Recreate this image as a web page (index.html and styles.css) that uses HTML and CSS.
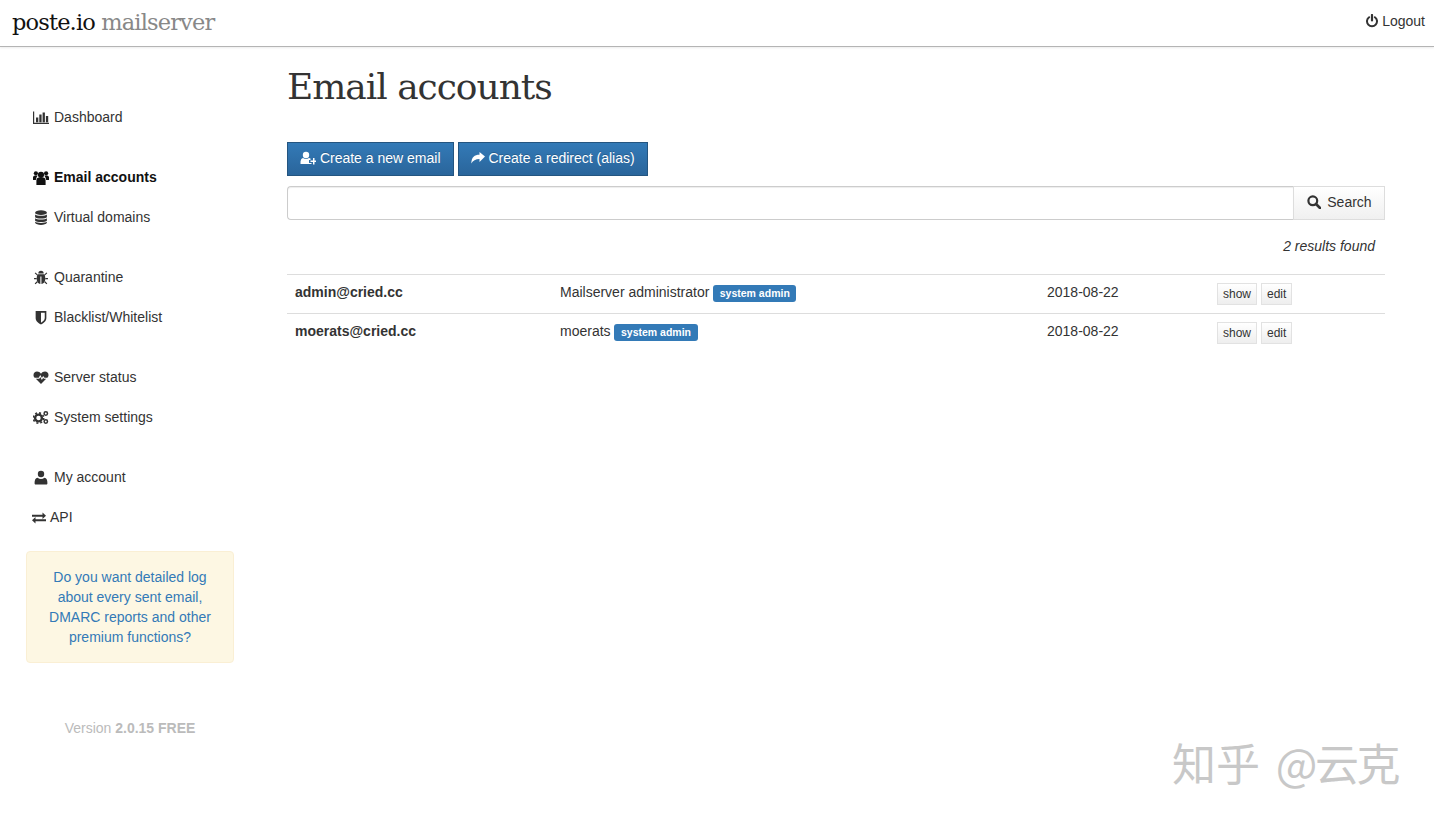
FILE: index.html
```html
<!DOCTYPE html>
<html lang="en">
<head>
<meta charset="utf-8">
<title>Email accounts</title>
<link rel="stylesheet" href="styles.css">
</head>
<body>
<header class="topbar">
  <div class="brand">poste.io <span class="brand-sub">mailserver</span></div>
  <a class="logout" href="#"><svg class="ic power" viewBox="0 0 12 14"><path d="M6 1v5.500" fill="none" stroke="currentColor" stroke-width="2.200" stroke-linecap="round"/><path d="M3.100 3.200A5 5 0 1 0 8.900 3.200" fill="none" stroke="currentColor" stroke-width="2" stroke-linecap="round"/></svg>Logout</a>
</header>
<div class="layout">
  <aside class="sidebar">
    <nav class="nav">
      <ul class="nav-group">
        <li><a href="#"><svg class="ic fw" viewBox="0 0 16 14"><path d="M0 1h1.200v11.300H16v1.200H0zM3 7h2.300v4.800H3zM6.300 4h2.300v7.800H6.300zM9.600 2h2.300v9.800H9.600zM12.900 5.500h2.300v6.300h-2.300z" fill="currentColor"/></svg>Dashboard</a></li>
      </ul>
      <ul class="nav-group">
        <li class="active"><a href="#"><svg class="ic fw" viewBox="0 0 16 14"><circle cx="8" cy="4.300" r="3.100" fill="currentColor"/><circle cx="2.900" cy="2.800" r="2.100" fill="currentColor"/><circle cx="13.100" cy="2.800" r="2.100" fill="currentColor"/><path d="M3.400 14.500V10c0-2 1.200-3 2.400-3h4.400c1.400 0 2.400 1 2.400 3v4.500zM0 9.500V7c0-1 .8-2 2-2h2.700L3.500 7 2.800 9.500zM16 9.500V7c0-1-.8-2-2-2h-2.700l1.200 2 .7 2.500z" fill="currentColor"/></svg>Email accounts</a></li>
        <li><a href="#"><svg class="ic fw" viewBox="0 0 14 14"><ellipse cx="7" cy="2.500" rx="5.500" ry="2.200" fill="currentColor"/><path d="M1.500 4.200C2.500 5.700 11.500 5.700 12.500 4.200V6.700C11.500 8.200 2.500 8.200 1.500 6.700zM1.500 7.700C2.500 9.200 11.500 9.200 12.500 7.700V10C11.500 11.500 2.500 11.500 1.500 10zM1.500 11C2.500 12.400 11.500 12.400 12.500 11V12C11.500 14.600 2.500 14.600 1.500 12z" fill="currentColor"/></svg>Virtual domains</a></li>
      </ul>
      <ul class="nav-group">
        <li><a href="#"><svg class="ic fw" viewBox="0 0 14 14"><path d="M4.500 3.200a2.500 2.500 0 0 1 5 0z" fill="currentColor"/><path d="M3.800 4h6.400c.6 1 .8 2.500.8 4.500 0 2.700-1.500 4.500-3.600 4.500V6h-1v7C4.300 13 3 11.200 3 8.500 3 6.500 3.200 5 3.800 4z" fill="currentColor"/><path d="M3.500 4.500 1.500 2.700M10.500 4.500l2-1.800M3 8H.5M11 8h2.500M3.500 11l-2 2M10.500 11l2 2" stroke="currentColor" stroke-width="1.100" fill="none"/></svg>Quarantine</a></li>
        <li><a href="#"><svg class="ic fw" viewBox="0 0 14 14"><path fill-rule="evenodd" d="M2 1h10v6.500c0 3-2.800 5-5 6-2.200-1-5-3-5-6zM7 2.600v9.200c1.700-.9 3.500-2.400 3.500-4.300V2.600z" fill="currentColor"/></svg>Blacklist/Whitelist</a></li>
      </ul>
      <ul class="nav-group">
        <li><a href="#"><svg class="ic fw" viewBox="0 0 16 14"><path d="M8 13.500 2.800 8.300h3.500l1-1.800 1.600 3 1.300-2.300 .7 1.100h2.300zM1.800 7.300C.8 6.300.5 5.400.5 4.400.5 2.400 2 1 4 1c1.700 0 3 .9 4 2.200C9 1.900 10.300 1 12 1c2 0 3.500 1.400 3.500 3.400 0 1-.3 1.900-1.300 2.900h-2.700L10.200 5.500 8.900 7.600 7.300 4.500 5.700 7.300z" fill="currentColor"/></svg>Server status</a></li>
        <li><a href="#"><svg class="ic fw" viewBox="0 0 16 14"><circle cx="5.500" cy="7.500" r="3.400" fill="none" stroke="currentColor" stroke-width="2.400"/><circle cx="5.500" cy="7.500" r="5.200" fill="none" stroke="currentColor" stroke-width="1.600" stroke-dasharray="2 2.080"/><circle cx="12.800" cy="3" r="1.700" fill="none" stroke="currentColor" stroke-width="1.500"/><circle cx="12.800" cy="11" r="1.700" fill="none" stroke="currentColor" stroke-width="1.500"/></svg>System settings</a></li>
      </ul>
      <ul class="nav-group">
        <li><a href="#"><svg class="ic fw" viewBox="0 0 14 14"><circle cx="7" cy="3.700" r="3" fill="currentColor"/><path d="M2 13.500c-.5 0-1-.5-1-1.200C1 9.500 1.800 7.300 3.800 7.300 4.800 8.100 5.800 8.500 7 8.500s2.200-.4 3.200-1.200c2 0 2.800 2.200 2.800 5 0 .7-.5 1.200-1 1.200z" fill="currentColor"/></svg>My account</a></li>
        <li class="plain"><a href="#"><svg class="ic wide" viewBox="0 0 14 12"><path d="M0 2.800h10.500V.6L14 3.800l-3.500 3.200V4.700H0zM14 7.300H3.500V5L0 8.200l3.500 3.200V9.200H14z" fill="currentColor"/></svg>API</a></li>
      </ul>
    </nav>
    <a class="promo" href="#">Do you want detailed log about every sent email, DMARC reports and other premium functions?</a>
    <p class="version">Version <b>2.0.15 FREE</b></p>
  </aside>
  <main class="content">
    <h1 class="title">Email accounts</h1>
    <div class="actions">
      <a class="btn btn-primary" href="#"><svg class="ic btn-ic" viewBox="0 0 16 14"><circle cx="6" cy="4" r="3.200" fill="currentColor"/><path d="M.5 13c-.3-4 1-6 2.500-6 1 .8 2 1.100 3 1.100s2-.3 3-1.100c.6 0 1 .2 1.500.6V9H9v3h2.500v1z" fill="currentColor"/><path d="M13 7h1.500v2.500H16V11h-1.500v2.500H13V11h-2.500V9.500H13z" fill="currentColor"/></svg> Create a new email</a>
      <a class="btn btn-primary" href="#"><svg class="ic" viewBox="0 0 14 14"><path d="M14 5.500 8.500 1v2.800C3.500 3.800.6 6 .3 12.500 2 9.500 4.500 8 8.500 8v3z" fill="currentColor"/></svg> Create a redirect (alias)</a>
    </div>
    <form class="search">
      <input class="search-input" type="text" aria-label="Search">
      <button class="btn-search" type="button"><svg class="ic search-ic" viewBox="0 0 14 14"><circle cx="5.800" cy="5.800" r="4.400" fill="none" stroke="currentColor" stroke-width="2.200"/><path d="M9 9l4 4" stroke="currentColor" stroke-width="2.600" stroke-linecap="round"/></svg> Search</button>
    </form>
    <p class="results">2 results found</p>
    <table class="accounts">
      <colgroup><col class="c-mail"><col class="c-name"><col class="c-date"><col></colgroup>
      <tr>
        <td><b>admin@cried.cc</b></td>
        <td>Mailserver administrator <span class="badge">system admin</span></td>
        <td>2018-08-22</td>
        <td><div class="row-actions"><a class="btn-xs" href="#">show</a><a class="btn-xs" href="#">edit</a></div></td>
      </tr>
      <tr>
        <td><b>moerats@cried.cc</b></td>
        <td>moerats <span class="badge">system admin</span></td>
        <td>2018-08-22</td>
        <td><div class="row-actions"><a class="btn-xs" href="#">show</a><a class="btn-xs" href="#">edit</a></div></td>
      </tr>
    </table>
  </main>
</div>
<div class="watermark">知乎 <span class="watermark-tail">@云克</span></div>
</body>
</html>
```
FILE: styles.css
```css
* { box-sizing: border-box; }
html, body { margin: 0; height: 100%; }
body {
  font: 14px/20px "Liberation Sans", Arial, sans-serif;
  color: #333;
  background: #fff;
  position: relative;
  overflow: hidden;
}
a { color: inherit; text-decoration: none; }
.ic { width: 14px; height: 14px; display: inline-block; vertical-align: -2px; }
.topbar {
  height: 47px;
  display: flex;
  justify-content: space-between;
  padding: 0 9px 0 12px;
  border-bottom: 1px solid #b4b4b4;
  box-shadow: 0 1px 2px rgba(0,0,0,.08);
}
.brand {
  font: 22.5px/44px "DejaVu Serif", serif;
  letter-spacing: -0.85px;
  color: #111;
}
.brand-sub { color: #888; }
.logout { line-height: 42px; color: #333; }
.power { width: 12px; margin-right: 4px; }
.layout { display: flex; }
.sidebar { width: 287px; flex: none; padding: 50px 53px 0 26px; }
.nav-group { list-style: none; margin: 0 0 20px; padding: 0; }
.nav-group:last-child { margin-bottom: 14px; }
.nav-group li { height: 40px; line-height: 40px; padding-left: 7px; color: #333; }
.nav-group li.active { font-weight: bold; color: #111; }
.nav-group li.plain { padding-left: 6px; }
.fw { width: 16px; height: 15px; margin-right: 5px; vertical-align: -3px; }
.wide { width: 14px; height: 12px; margin-right: 4px; vertical-align: -2px; }
.promo {
  display: block;
  height: 112px;
  padding: 15px 20px;
  text-align: center;
  color: #337ab7;
  background: #fdf7e3;
  border: 1px solid #faefd4;
  border-radius: 4px;
}
.version { margin: 55px 0 0; text-align: center; color: #bbb; }
.content { flex: none; width: 1098px; padding-top: 20px; }
.title {
  margin: 0;
  font: 400 36px/40px "DejaVu Serif", serif;
  letter-spacing: -1.03px;
  color: #333;
}
.actions { display: flex; gap: 4px; margin-top: 35px; }
.btn {
  display: block;
  height: 34px;
  padding: 5px 12px 7px;
  color: #fff;
  border: 1px solid #245580;
  background: linear-gradient(#337ab7, #2a659b);
  text-shadow: 0 -1px 0 rgba(0,0,0,.2);
  white-space: nowrap;
}
.btn-ic { width: 16px; }
.search { display: flex; margin: 10px 0 0; height: 34px; }
.search-input {
  flex: 1;
  min-width: 0;
  height: 34px;
  border: 1px solid #ccc;
  border-right: 0;
  border-radius: 4px 0 0 4px;
  box-shadow: inset 0 1px 1px rgba(0,0,0,.075);
  background: #fff;
}
.btn-search {
  width: 92px;
  height: 34px;
  padding: 0 0 2px 1px;
  font: inherit;
  color: #333;
  border: 1px solid #ddd;
  background: linear-gradient(#fff, #f0f0f0);
}
.search-ic { margin-right: 2px; }
.results { margin: 16px 0 18px; padding-right: 10px; text-align: right; font-style: italic; }
.accounts { width: 100%; border-collapse: collapse; table-layout: fixed; }
.accounts td { height: 39px; padding: 7px 8px 0; border-top: 1px solid #ddd; vertical-align: top; }
.c-mail { width: 265px; }
.c-name { width: 487px; }
.c-date { width: 170px; }
.badge {
  display: inline-block;
  padding: 2px 6.5px 3px;
  font-size: 10.5px;
  font-weight: bold;
  line-height: 12px;
  color: #fff;
  background: #337ab7;
  border-radius: 3px;
  vertical-align: 0;
}
.row-actions { display: flex; gap: 4px; }
.btn-xs {
  display: block;
  height: 22px;
  margin-top: 1px;
  padding: 1px 5px;
  font-size: 12px;
  line-height: 18px;
  color: #333;
  border: 1px solid #e2e2e2;
  background: linear-gradient(#fff, #eee);
}
.watermark {
  position: absolute;
  left: 1172px;
  top: 732px;
  font: 400 44px/60px "Noto Sans CJK SC", sans-serif;
  word-spacing: 6px;
  color: #c8c8c8;
  white-space: nowrap;
}
.watermark-tail { letter-spacing: -2.5px; }
```
